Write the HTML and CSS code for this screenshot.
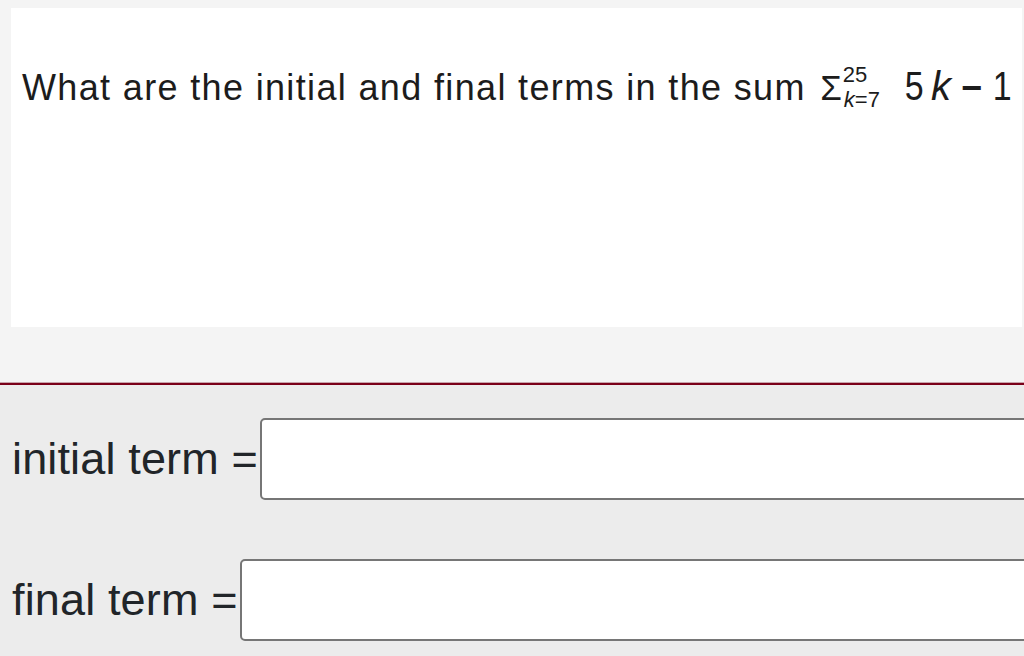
FILE: index.html
```html
<!DOCTYPE html>
<html>
<head>
<meta charset="utf-8">
<link rel="stylesheet" href="styles.css">
</head>
<body>
<div class="top">
  <div class="card">
    <p class="question">What are the initial and final terms in the sum <span class="math"><span class="sigma">Σ</span><span class="limits"><span class="upper">25</span><span class="lower"><i>k</i>=7</span></span><span class="term"><span class="five">5</span><i class="kvar">k</i><span class="minus">−</span><span class="one">1</span></span></span></p>
  </div>
</div>
<div class="rule"></div>
<div class="answers">
  <div class="row row-first">
    <label class="label" for="a1">initial term =</label>
    <input class="box box-initial" id="a1" type="text">
  </div>
  <div class="row row-second">
    <label class="label" for="a2">final term =</label>
    <input class="box box-final" id="a2" type="text">
  </div>
</div>
</body>
</html>
```
FILE: styles.css
```css
html, body {
  margin: 0;
  padding: 0;
  overflow: hidden;
  width: 1024px;
  height: 656px;
}
body {
  background: #ececec;
}
.top {
  background: #f4f4f4;
  padding: 8px 2px 0 11px;
  height: 374px;
}
.card {
  background: #ffffff;
  height: 319px;
  padding: 0 0 0 11px;
  box-sizing: border-box;
  padding-top: 56px;
}
.question {
  margin: 0;
  font-family: "Liberation Sans", Arial, sans-serif;
  font-size: 36px;
  letter-spacing: 1.35px;
  line-height: 1;
  color: #1c1c1c;
  white-space: nowrap;
}
.math {
  letter-spacing: 0;
}
.sigma {
  font-size: 35px;
  margin-left: 3px;
}
.limits {
  display: inline-flex;
  flex-direction: column;
  vertical-align: 18px;
  font-size: 22px;
  line-height: 1;
  gap: 3px;
  margin-left: 0;
  width: 36px;
}
.upper {
  margin-left: 1px;
}
.lower {
  margin-left: 2px;
}
.limits i {
  font-style: italic;
}
.term {
  font-size: 40px;
  margin-left: 25px;
}
.five {
  display: inline-block;
  transform: scaleX(0.85);
}
.kvar {
  margin-left: 6px;
}
.minus {
  font-size: 36px;
  font-weight: bold;
  margin: 0 9px 0 10px;
}
.one {
  display: inline-block;
  transform: scaleX(0.85);
}
.rule {
  border-top: 1px solid #c8a4ab;
  height: 2px;
  background: #7a0019;
}
.answers {
  padding: 33px 0 0 12px;
}
.row {
  display: flex;
  align-items: center;
  white-space: nowrap;
}
.row-second {
  margin-top: 59px;
}
.label {
  font-family: "Liberation Sans", Arial, sans-serif;
  font-size: 45px;
  letter-spacing: 0.15px;
  color: #212529;
}
.box {
  flex: none;
  width: 820px;
  height: 82px;
  box-sizing: border-box;
  border: 2px solid #767676;
  border-radius: 5px;
  background: #ffffff;
  margin: 0 0 0 2px;
  padding: 0;
  outline: none;
}
```
